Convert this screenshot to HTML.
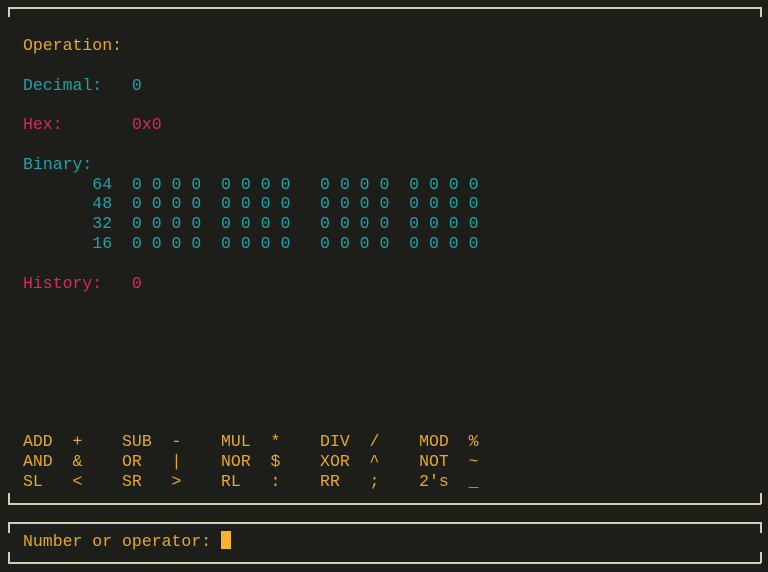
<!DOCTYPE html>
<html><head><style>
html,body{margin:0;padding:0;background:#1d1d19;width:768px;height:572px;overflow:hidden;position:relative}
pre{position:absolute;left:23px;top:36px;margin:0;font-family:"Liberation Mono","DejaVu Sans Mono",monospace;font-size:16.5px;line-height:19.8px;color:#e6a82a}
.c{color:#1ea3ac}.p{color:#d42b62}.y{color:#e6a82a}
.l{position:absolute;background:#d6ccb3}
.cur{display:inline-block;width:10px;height:18px;background:#f6b42a;vertical-align:-3px}
</style></head><body>
<div class="l" style="left:8px;top:7px;width:753px;height:1.5px"></div>
<div class="l" style="left:8px;top:7px;width:1.5px;height:10px"></div>
<div class="l" style="left:760px;top:7px;width:1.5px;height:10px"></div>
<div class="l" style="left:8px;top:503px;width:753px;height:1.5px"></div>
<div class="l" style="left:8px;top:493px;width:1.5px;height:11px"></div>
<div class="l" style="left:760px;top:493px;width:1.5px;height:11px"></div>
<div class="l" style="left:8px;top:522px;width:753px;height:1.5px"></div>
<div class="l" style="left:8px;top:522px;width:1.5px;height:11px"></div>
<div class="l" style="left:760px;top:522px;width:1.5px;height:11px"></div>
<div class="l" style="left:8px;top:562px;width:753px;height:1.5px"></div>
<div class="l" style="left:8px;top:552px;width:1.5px;height:11px"></div>
<div class="l" style="left:760px;top:552px;width:1.5px;height:11px"></div>
<pre><span class="y">Operation:</span>

<span class="c">Decimal:   0</span>

<span class="p">Hex:       0x0</span>

<span class="c">Binary:
       64  0 0 0 0  0 0 0 0   0 0 0 0  0 0 0 0
       48  0 0 0 0  0 0 0 0   0 0 0 0  0 0 0 0
       32  0 0 0 0  0 0 0 0   0 0 0 0  0 0 0 0
       16  0 0 0 0  0 0 0 0   0 0 0 0  0 0 0 0</span>

<span class="p">History:   0</span>







ADD  +    SUB  -    MUL  *    DIV  /    MOD  %
AND  &amp;    OR   |    NOR  $    XOR  ^    NOT  ~
SL   &lt;    SR   &gt;    RL   :    RR   ;    2's  _</pre>
<pre style="top:531px">Number or operator: <span class="cur"></span></pre>
</body></html>
